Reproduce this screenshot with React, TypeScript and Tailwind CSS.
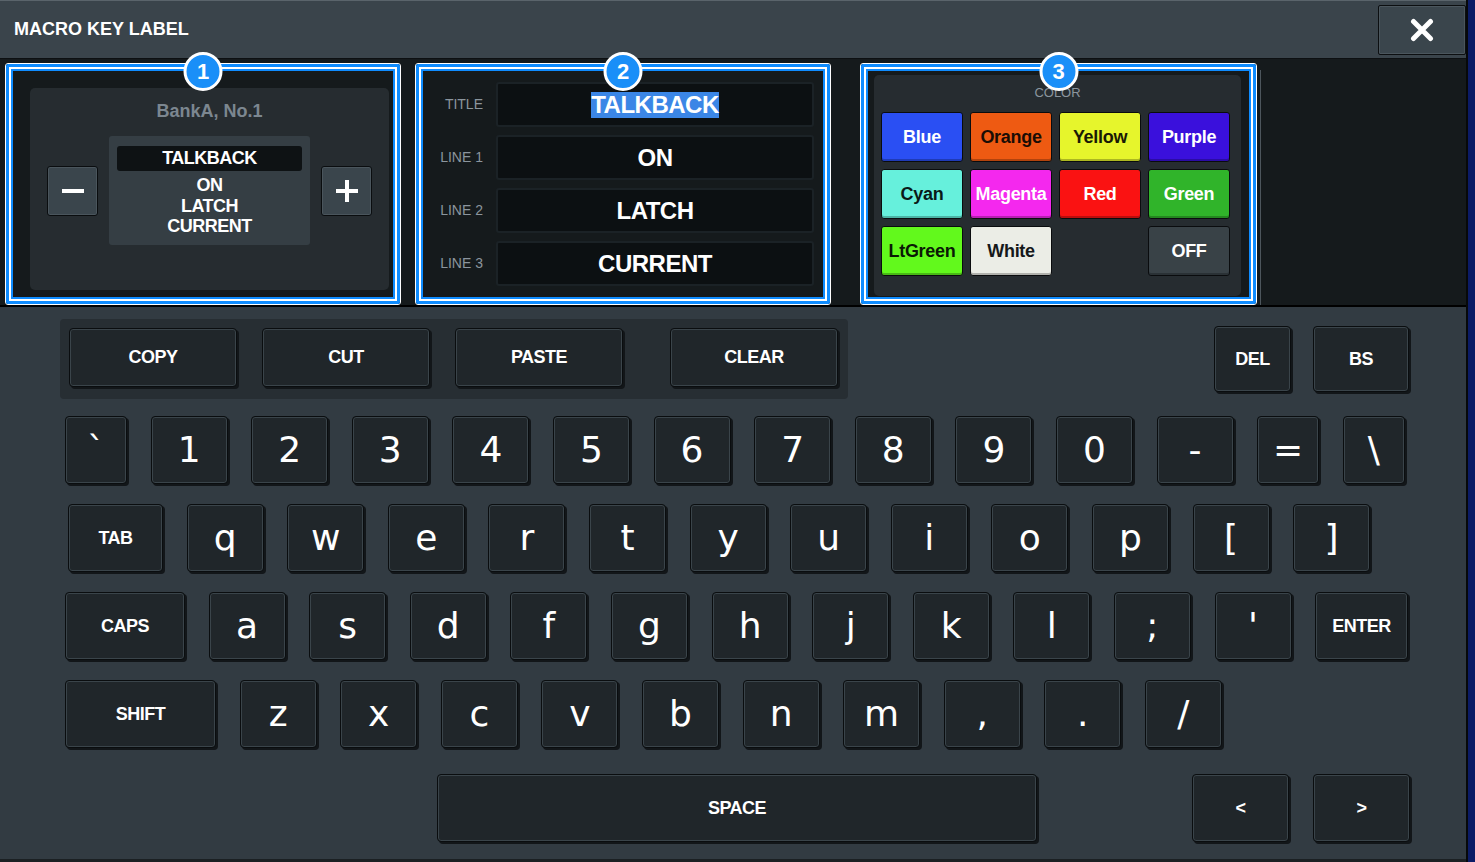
import React from "react";

type KeyDef = { label: string; w: string; mono?: boolean };

const keyBase =
  "flex shrink-0 items-center justify-center rounded-[4px] border border-[#0a0d0f] bg-[#20262a] text-white shadow-[inset_0_0_0_1px_#3a444a,2px_2px_0_#121619]";
const labelText = "text-[18px] font-bold tracking-[-0.5px]";
const charText = "font-['DejaVu_Sans',sans-serif] text-[36px] leading-none";

const ch = (label: string, w = "w-[77px]"): KeyDef => ({ label, w, mono: true });

const rows: { pad: string; keys: KeyDef[] }[] = [
  {
    pad: "pl-[65px]",
    keys: [
      ch("`", "w-[62px]"),
      ...["1", "2", "3", "4", "5", "6", "7", "8", "9", "0", "-"].map((c) => ch(c)),
      ch("=", "w-[62px]"),
      ch("\\", "w-[62px]"),
    ],
  },
  {
    pad: "pl-[68px]",
    keys: [
      { label: "TAB", w: "w-[95px]" },
      ...["q", "w", "e", "r", "t", "y", "u", "i", "o", "p", "[", "]"].map((c) => ch(c)),
    ],
  },
  {
    pad: "pl-[65px]",
    keys: [
      { label: "CAPS", w: "w-[120px]" },
      ...["a", "s", "d", "f", "g", "h", "j", "k", "l", ";", "'"].map((c) => ch(c)),
      { label: "ENTER", w: "w-[93px]" },
    ],
  },
  {
    pad: "pl-[65px]",
    keys: [
      { label: "SHIFT", w: "w-[151px]" },
      ...["z", "x", "c", "v", "b", "n", "m", ",", ".", "/"].map((c) => ch(c)),
    ],
  },
];

const colors = [
  { name: "Blue", bg: "bg-[#2a4ff3]", fg: "text-white" },
  { name: "Orange", bg: "bg-[#ee5a12]", fg: "text-[#1a0d05]" },
  { name: "Yellow", bg: "bg-[#e6f52c]", fg: "text-[#1a1a05]" },
  { name: "Purple", bg: "bg-[#3a10dc]", fg: "text-white" },
  { name: "Cyan", bg: "bg-[#66f0dc]", fg: "text-[#0a1a18]" },
  { name: "Magenta", bg: "bg-[#f428ee]", fg: "text-white" },
  { name: "Red", bg: "bg-[#fa1212]", fg: "text-white" },
  { name: "Green", bg: "bg-[#30b42a]", fg: "text-white" },
  { name: "LtGreen", bg: "bg-[#62f91c]", fg: "text-[#0a1a05]" },
  { name: "White", bg: "bg-[#ebede6]", fg: "text-[#15181a]" },
  { name: "", bg: "", fg: "" },
  { name: "OFF", bg: "bg-[#394247]", fg: "text-white" },
];

const Badge = ({ n }: { n: number }) => (
  <div className="absolute left-1/2 top-[-12px] z-10 flex h-[39px] w-[39px] -translate-x-1/2 items-center justify-center rounded-full border-[3px] border-white bg-[#1a8ff8] text-[22px] font-bold leading-none text-white">
    {n}
  </div>
);

const Outline = ({ n, w, ml, children }: { n: number; w: string; ml: string; children: React.ReactNode }) => (
  <div className={`relative h-[242px] shrink-0 rounded-[3px] border border-white ${w} ${ml}`}>
    <Badge n={n} />
    <div className="h-full rounded-[2px] border-[3px] border-[#0f8cff]">
      <div className="h-full border-2 border-white">
        <div className="h-full border-2 border-[#0f8cff]">{children}</div>
      </div>
    </div>
  </div>
);

const SmallBtn = ({ plus }: { plus?: boolean }) => (
  <div className="flex h-[50px] w-[51px] items-center justify-center rounded-[3px] border border-[#0a0d0f] bg-[#3a454c] shadow-[inset_0_0_0_1px_#4a555c]">
    <svg width="24" height="24" viewBox="0 0 24 24">
      <rect x="1" y="10" width="22" height="4" fill="white" />
      {plus && <rect x="10" y="1" width="4" height="22" fill="white" />}
    </svg>
  </div>
);

export default function App() {
  return (
    <div className="flex h-[862px] w-[1475px] overflow-hidden bg-[#0b1b66] font-['Liberation_Sans',Arial,sans-serif] text-white">
      <div className="flex h-full w-[1468px] shrink-0 flex-col border-r-2 border-[#07090a]">
        {/* title bar */}
        <div className="flex h-[58px] shrink-0 items-center justify-between border-t border-[#5a646b] bg-[#3a444b] pl-[14px]">
          <span className="text-[18px] font-bold">MACRO KEY LABEL</span>
          <div className="mt-[1px] flex h-[50px] w-[88px] items-center justify-center rounded-[2px] border border-[#0c0f11] bg-[#3a454c] shadow-[inset_0_0_0_1px_#4b565d]">
            <svg width="24" height="24" viewBox="0 0 24 24">
              <path d="M3.5 3.5 L20.5 20.5 M20.5 3.5 L3.5 20.5" stroke="white" strokeWidth="5" strokeLinecap="round" />
            </svg>
          </div>
        </div>

        {/* label editor area */}
        <div className="flex h-[249px] shrink-0 items-start border-t border-[#0d1012] border-b-2 border-b-black bg-[#151a1c] pl-[5px] pt-[4px]">
          <Outline n={1} w="w-[396px]" ml="">
            <div className="h-full pb-[7px] pl-[17px] pr-[4px] pt-[17px]">
              <div className="flex h-full flex-col items-center rounded-[5px] bg-[#262c30] pt-[12px]">
                <div className="text-[18px] font-bold leading-[22px] text-[#7c8790]">BankA, No.1</div>
                <div className="mt-[14px] flex w-full items-center justify-between px-[17px]">
                  <SmallBtn />
                  <div className="flex h-[109px] w-[201px] flex-col items-center rounded-[3px] bg-[#353e44] px-[8px] pt-[10px]">
                    <div className="flex h-[25px] w-full items-center justify-center rounded-[3px] bg-[#0e1214] text-[18px] font-bold tracking-[-0.5px]">
                      TALKBACK
                    </div>
                    <div className="mt-[4px] flex flex-col items-center text-[18px] font-bold leading-[20.5px] tracking-[-0.5px]">
                      <span>ON</span>
                      <span>LATCH</span>
                      <span>CURRENT</span>
                    </div>
                  </div>
                  <SmallBtn plus />
                </div>
              </div>
            </div>
          </Outline>

          <Outline n={2} w="w-[416px]" ml="ml-[14px]">
            <div className="flex h-full flex-col gap-[8px] pr-[9px] pt-[11px]">
              {[
                ["TITLE", "TALKBACK"],
                ["LINE 1", "ON"],
                ["LINE 2", "LATCH"],
                ["LINE 3", "CURRENT"],
              ].map(([label, value], i) => (
                <div key={label} className="flex items-center">
                  <div className="w-[60px] text-right text-[14px] text-[#8b959d]">{label}</div>
                  <div className="ml-[13px] flex h-[45px] flex-1 items-center justify-center rounded-[3px] border-2 border-[#1b2226] bg-[#0c1012] text-[24px] font-bold tracking-[-0.5px]">
                    {i === 0 ? <span className="bg-[#3b86e6] leading-[26px]">{value}</span> : value}
                  </div>
                </div>
              ))}
            </div>
          </Outline>

          <Outline n={3} w="w-[397px]" ml="ml-[29px]">
            <div className="h-full pb-[1px] pl-[6px] pr-[8px] pt-[4px]">
              <div className="flex h-full flex-col items-center rounded-[5px] bg-[#262c30] pt-[10px]">
                <div className="text-[13px] leading-[16px] text-[#8b959d]">COLOR</div>
                <div className="ml-[7px] mt-[11px] grid grid-cols-[repeat(4,82px)] gap-[7px] self-start">
                  {colors.map((c, i) =>
                    c.name ? (
                      <div
                        key={c.name}
                        className={`flex h-[50px] items-center justify-center rounded-[3px] border border-[#0a0c0e] text-[18px] font-bold tracking-[-0.3px] shadow-[inset_0_-2px_0_rgba(0,0,0,0.25)] ${c.bg} ${c.fg}`}
                      >
                        {c.name}
                      </div>
                    ) : (
                      <div key={i} className="h-[50px]" />
                    )
                  )}
                </div>
              </div>
            </div>
          </Outline>
          <div className="ml-[3px] mt-[7px] h-[235px] w-px bg-[#4d565c]" />
        </div>

        {/* keyboard */}
        <div className="flex flex-1 flex-col border-b-[3px] border-[#1b2023] bg-[#323b42] pt-[12px]">
          <div className="flex items-center">
            <div className="ml-[60px] flex h-[80px] items-start rounded-[4px] bg-[#272e33] pl-[9px] pr-[10px] pt-[9px]">
              {["COPY", "CUT", "PASTE", "CLEAR"].map((l, i) => (
                <div key={l} className={`${keyBase} ${labelText} h-[59px] w-[168px] ${i === 0 ? "" : i === 3 ? "ml-[47px]" : "ml-[25px]"}`}>
                  {l}
                </div>
              ))}
            </div>
            <div className={`${keyBase} ${labelText} ml-[366px] h-[66px] w-[77px]`}>DEL</div>
            <div className={`${keyBase} ${labelText} ml-[22px] h-[66px] w-[96px]`}>BS</div>
          </div>

          <div className="mt-[17px] flex flex-col gap-[20px]">
            {rows.map((row, r) => (
              <div key={r} className={`flex gap-[23.6px] ${row.pad}`}>
                {row.keys.map((k) => (
                  <div key={k.label} className={`${keyBase} h-[68px] ${k.w} ${k.mono ? charText : labelText}`}>
                    {k.label}
                  </div>
                ))}
              </div>
            ))}
          </div>

          <div className="mt-[26px] flex">
            <div className={`${keyBase} ${labelText} ml-[437px] h-[68px] w-[600px]`}>SPACE</div>
            <div className={`${keyBase} ${labelText} ml-[155px] h-[68px] w-[97px]`}>&lt;</div>
            <div className={`${keyBase} ${labelText} ml-[24px] h-[68px] w-[97px]`}>&gt;</div>
          </div>
        </div>
      </div>
    </div>
  );
}
